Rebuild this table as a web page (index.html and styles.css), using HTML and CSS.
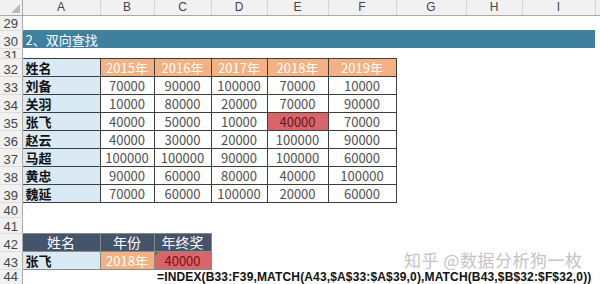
FILE: index.html
```html
<!DOCTYPE html>
<html lang="zh">
<head>
<meta charset="utf-8">
<title>双向查找</title>
<link rel="stylesheet" href="styles.css">
</head>
<body>
<div class="wrap">
<table class="sheet">
<colgroup>
<col class="w-rh"><col class="w-a"><col class="w-b"><col class="w-c"><col class="w-d"><col class="w-e"><col class="w-f"><col class="w-g"><col class="w-h"><col class="w-i"><col class="w-x">
</colgroup>
<thead>
<tr class="r-hd">
<th class="corner"><svg class="tri" width="9" height="9" viewBox="0 0 9 9"><polygon points="9,0 9,9 0,9" fill="#b9b9b9"/></svg></th>
<th>A</th><th>B</th><th>C</th><th>D</th><th>E</th><th>F</th><th>G</th><th>H</th><th>I</th><th class="edge"></th>
</tr>
</thead>
<tbody>
<tr class="r-15"><th>29</th><td colspan="10"></td></tr>
<tr class="r-18"><th>30</th><td colspan="9" class="title">2、双向查找</td><td></td></tr>
<tr class="r-10"><th><span class="clip">31</span></th><td colspan="10"></td></tr>
<tr class="r-18"><th>32</th><td class="d name">姓名</td><td class="d yr">2015年</td><td class="d yr">2016年</td><td class="d yr">2017年</td><td class="d yr">2018年</td><td class="d yr">2019年</td><td colspan="4"></td></tr>
<tr class="r-18"><th>33</th><td class="d name">刘备</td><td class="d n">70000</td><td class="d n">90000</td><td class="d n">100000</td><td class="d n">70000</td><td class="d n">10000</td><td colspan="4"></td></tr>
<tr class="r-18"><th>34</th><td class="d name">关羽</td><td class="d n">10000</td><td class="d n">80000</td><td class="d n">20000</td><td class="d n">70000</td><td class="d n">90000</td><td colspan="4"></td></tr>
<tr class="r-18"><th>35</th><td class="d name">张飞</td><td class="d n">40000</td><td class="d n">50000</td><td class="d n">10000</td><td class="d n hit">40000</td><td class="d n">70000</td><td colspan="4"></td></tr>
<tr class="r-18"><th>36</th><td class="d name">赵云</td><td class="d n">40000</td><td class="d n">30000</td><td class="d n">20000</td><td class="d n">100000</td><td class="d n">90000</td><td colspan="4"></td></tr>
<tr class="r-18"><th>37</th><td class="d name">马超</td><td class="d n">100000</td><td class="d n">100000</td><td class="d n">90000</td><td class="d n">100000</td><td class="d n">60000</td><td colspan="4"></td></tr>
<tr class="r-18"><th>38</th><td class="d name">黄忠</td><td class="d n">90000</td><td class="d n">60000</td><td class="d n">80000</td><td class="d n">40000</td><td class="d n">100000</td><td colspan="4"></td></tr>
<tr class="r-18"><th>39</th><td class="d name">魏延</td><td class="d n">70000</td><td class="d n">60000</td><td class="d n">100000</td><td class="d n">20000</td><td class="d n">60000</td><td colspan="4"></td></tr>
<tr class="r-15"><th>40</th><td colspan="10"></td></tr>
<tr class="r-16"><th>41</th><td colspan="10"></td></tr>
<tr class="r-18"><th>42</th><td class="q qh">姓名</td><td class="q qh">年份</td><td class="q qh">年终奖</td><td colspan="7"></td></tr>
<tr class="r-18"><th>43</th><td class="q name">张飞</td><td class="q yr">2018年</td><td class="q res">40000</td><td colspan="7"></td></tr>
<tr class="r-15 last"><th>44</th><td></td><td></td><td colspan="8" class="formula">=INDEX(B33:F39,MATCH(A43,$A$33:$A$39,0),MATCH(B43,$B$32:$F$32,0))</td></tr>
</tbody>
</table>
<div class="watermark">知乎 @数据分析狗一枚</div>
</div>
</body>
</html>
```

FILE: styles.css
```css
html, body {
  margin: 0;
  padding: 0;
  background: #ffffff;
}
.wrap {
  position: relative;
  width: 600px;
  height: 284px;
  overflow: hidden;
}
.sheet {
  table-layout: fixed;
  border-collapse: collapse;
  width: 600px;
  font-family: "Noto Sans CJK SC", "Noto Sans", sans-serif;
  font-size: 13px;
  color: #404040;
}
.w-rh { width: 22px; }
.w-a { width: 78px; }
.w-b { width: 54px; }
.w-c { width: 57px; }
.w-d { width: 56px; }
.w-e { width: 61px; }
.w-f { width: 68px; }
.w-g { width: 70px; }
.w-h { width: 56px; }
.w-i { width: 73px; }
.w-x { width: 5px; }

.sheet td, .sheet th {
  padding: 0;
  overflow: hidden;
  white-space: nowrap;
  line-height: 1;
}

.r-hd { height: 15px; }
.r-hd th {
  background: #f1f1f1;
  border-right: 1px solid #d6d6d6;
  border-bottom: 1px solid #a8a8a8;
  font-family: "Liberation Sans", Arial, sans-serif;
  font-weight: normal;
  font-size: 12px;
  color: #444;
  text-align: center;
}
.r-hd th.corner {
  position: relative;
  border-right: 1px solid #a8a8a8;
}
.tri {
  position: absolute;
  right: 2px;
  bottom: 2px;
}
.r-hd th.edge { border-right: none; }

tbody th {
  background: #f1f1f1;
  border-right: 1px solid #a8a8a8;
  border-bottom: 1px solid #dcdcdc;
  font-family: "Liberation Sans", Arial, sans-serif;
  font-weight: normal;
  font-size: 13px;
  color: #444;
  text-align: center;
  vertical-align: bottom;
}

.r-15 { height: 15px; }
.r-16 { height: 16px; }
.r-18 { height: 18px; }
.r-10 { height: 10px; }
.r-10 th { vertical-align: top; }
.clip {
  display: block;
  height: 9px;
  line-height: 13px;
  overflow: hidden;
}
.last th { vertical-align: top; line-height: 14px; }

.title {
  background: #3f809f;
  color: #ffffff;
  font-size: 13px;
  padding-left: 3px !important;
  text-align: left;
}

.d {
  border: 1px solid #3d3d3d;
}
.name {
  background: #d9eaf5;
  color: #111;
  font-weight: bold;
  font-size: 13px;
  text-align: left;
  padding-left: 3px !important;
}
.yr {
  background: #f4b183;
  color: #ffffff;
  text-align: center;
}
.n {
  text-align: center;
  color: #505050;
}
.hit {
  background: #d9656a;
  color: #5a1a1a;
}

.q {
  border: 1px solid #8a8a8a;
}
.qh {
  background: #44546a;
  color: #ffffff;
  text-align: center;
  font-size: 14px;
}
.res {
  position: relative;
  background: #d9656a;
  color: #7a1010;
  text-align: center;
}
.res::before {
  content: "";
  position: absolute;
  left: 0;
  top: 0;
  border-top: 4px solid #3f8f3f;
  border-right: 4px solid transparent;
}

.formula {
  font-family: "Liberation Sans", Arial, sans-serif;
  font-weight: bold;
  font-size: 12px;
  letter-spacing: 0.15px;
  line-height: 14px !important;
  color: #111;
  padding-left: 3px !important;
  text-align: left;
  vertical-align: top;
}

.watermark {
  position: absolute;
  left: 404px;
  top: 247px;
  font-family: "Noto Sans CJK SC", sans-serif;
  font-size: 17px;
  color: #c4c4c4;
  letter-spacing: 0.5px;
  white-space: nowrap;
}
```
